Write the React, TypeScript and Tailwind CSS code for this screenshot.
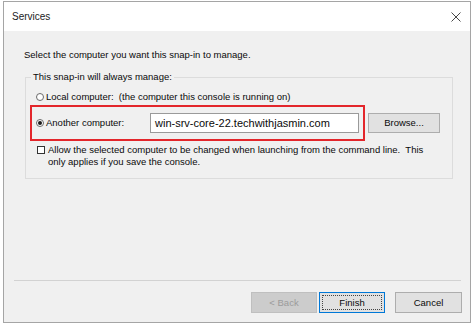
import React from "react";

function Radio({ checked }: { checked?: boolean }) {
  return (
    <span className="flex h-[8px] w-[8px] shrink-0 items-center justify-center rounded-full border border-[#6a6a6a] bg-white">
      {checked ? <span className="h-[4px] w-[4px] rounded-full bg-[#1a1a1a]" /> : null}
    </span>
  );
}

export default function App() {
  return (
    <div
      className="h-[326px] w-[474px] overflow-hidden bg-white pt-[1px] pl-[3px] text-[#0a0a0a]"
      style={{ fontFamily: '"Liberation Sans", Arial, sans-serif' }}
    >
      <div className="flex h-[322px] w-[468px] flex-col border border-[#a5a5a5]">
        {/* Title bar */}
        <div className="flex h-[29px] shrink-0 items-center justify-between bg-white pl-[8px] pr-[9px]">
          <span className="text-[10px] leading-[12px] text-[#222]">Services</span>
          <svg width="10" height="10" viewBox="0 0 10 10" className="text-[#333]">
            <path d="M0.5 0.5 L9.5 9.5 M9.5 0.5 L0.5 9.5" stroke="currentColor" strokeWidth="0.9" fill="none" />
          </svg>
        </div>

        {/* Body */}
        <div className="flex flex-1 flex-col bg-[#f0f0f0] pt-[18px] text-[9.5px] leading-[12px]">
          <div className="pl-[20px]">Select the computer you want this snap-in to manage.</div>

          <fieldset className="ml-[21px] mt-[10px] w-[428px] border border-[#dcdcdc] pb-[10px]">
            <legend className="ml-[5px] px-[2px]">This snap-in will always manage:</legend>

            <div className="mt-[8px] flex h-[12px] items-center pl-[10px]">
              <Radio />
              <span className="ml-[2px]">Local computer:&nbsp; (the computer this console is running on)</span>
            </div>

            <div className="mt-[2px] flex items-center">
              <div className="ml-[4px] flex h-[36px] w-[335px] items-center border-2 border-[#e3262b] pl-[4px] pr-[4px]">
                <Radio checked />
                <span className="ml-[2px]">Another computer:</span>
                <div className="ml-auto flex h-[20px] w-[209px] items-center border border-[#9a9a9a] bg-white pl-[4px] text-[11px]">
                  win-srv-core-22.techwithjasmin.com
                </div>
              </div>
              <div className="ml-[3px] flex h-[20px] w-[72px] items-center justify-center border border-[#adadad] bg-[#e1e1e1]">
                Browse...
              </div>
            </div>

            <div className="mt-[3px] flex items-start pl-[11px]">
              <span className="mt-[2px] h-[8px] w-[8px] shrink-0 border border-[#333] bg-white" />
              <span className="ml-[3px] w-[392px]">
                Allow the selected computer to be changed when launching from the command line.&nbsp; This only applies if you save the console.
              </span>
            </div>
          </fieldset>

          <div className="mt-auto ml-[10px] mr-[9px] border-t border-[#d2d2d2]" />

          <div className="mt-[11px] mb-[9px] mr-[8px] flex justify-end">
            <div className="flex h-[21px] w-[66px] items-center justify-center border border-[#bfbfbf] bg-[#cccccc] text-[#9b9b9b]">
              &lt; Back
            </div>
            <div className="ml-[2px] flex h-[21px] w-[66px] border border-[#0078d7] bg-[#e1e1e1] p-[2px]">
              <span className="flex flex-1 items-center justify-center border border-dotted border-[#444]">Finish</span>
            </div>
            <div className="ml-[10px] flex h-[21px] w-[67px] items-center justify-center border border-[#adadad] bg-[#e1e1e1]">
              Cancel
            </div>
          </div>
        </div>
      </div>
    </div>
  );
}
